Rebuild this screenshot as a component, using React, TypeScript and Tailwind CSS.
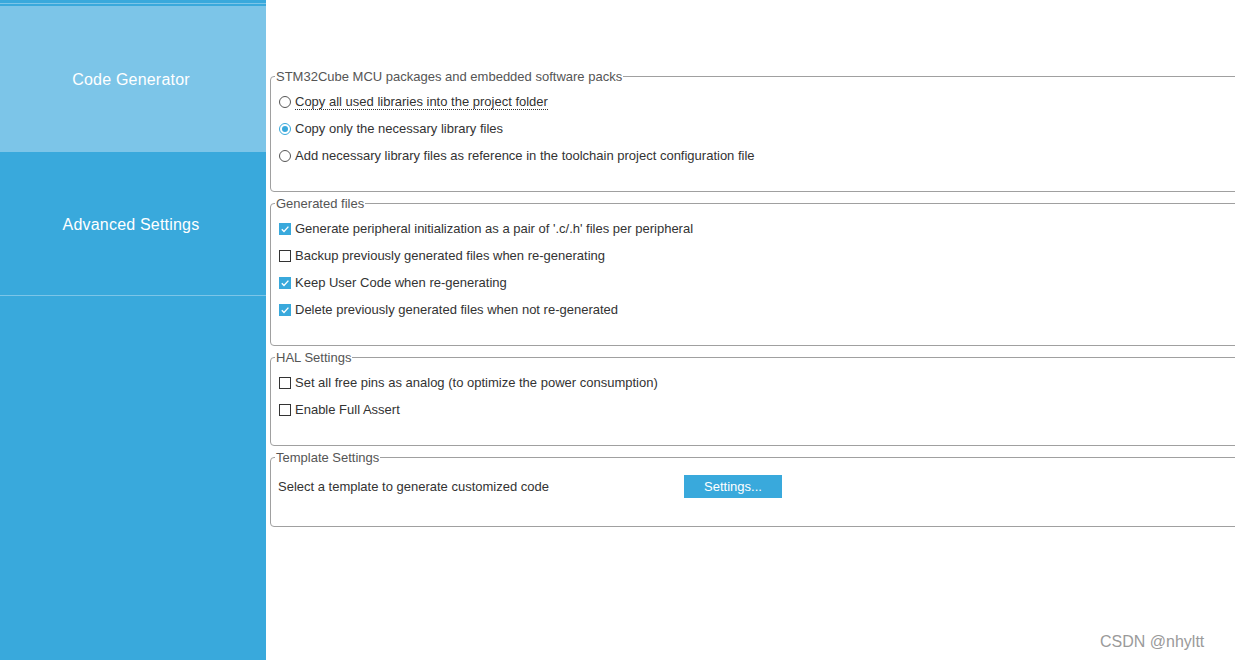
import React from "react";

const font = { fontFamily: '"Liberation Sans", Arial, sans-serif' };

function Radio({ checked }: { checked?: boolean }) {
  return (
    <span
      className={`flex h-[12px] w-[12px] shrink-0 items-center justify-center rounded-full border ${
        checked ? "border-[#39a9dc]" : "border-[#555555]"
      } bg-white`}
    >
      {checked && <span className="h-[6px] w-[6px] rounded-full bg-[#39a9dc]" />}
    </span>
  );
}

function Check({ checked }: { checked?: boolean }) {
  return checked ? (
    <span className="flex h-[12px] w-[12px] shrink-0 items-center justify-center bg-[#39a9dc]">
      <svg width="10" height="10" viewBox="0 0 10 10">
        <path d="M1.8 5.2 L4 7.4 L8.4 2.6" fill="none" stroke="white" strokeWidth="1.4" />
      </svg>
    </span>
  ) : (
    <span className="h-[12px] w-[12px] shrink-0 border border-[#333333] bg-white" />
  );
}

function Row({ children, label, underline }: { children: React.ReactNode; label: string; underline?: boolean }) {
  return (
    <div className="flex h-[27px] items-center gap-[4px] pl-[4px]">
      {children}
      <span
        className={`text-[13px] text-[#333333] ${underline ? "border-b border-dotted border-[#333333] leading-[15px]" : ""}`}
      >
        {label}
      </span>
    </div>
  );
}

function Group({ title, children, pb = "pb-[22px]", pt = "pt-[4px]" }: { title: string; children: React.ReactNode; pb?: string; pt?: string }) {
  return (
    <fieldset className={`mr-[-20px] rounded-[4px] border border-[#a0a0a0] pl-[4px] ${pt} ${pb}`}>
      <legend className="px-[1px] text-[13px] leading-[15px] text-[#555555]">{title}</legend>
      {children}
    </fieldset>
  );
}

export default function App() {
  return (
    <div className="relative flex h-[660px] w-[1235px] overflow-hidden bg-white" style={font}>
      <aside className="flex w-[266px] shrink-0 flex-col bg-[#39a9dc]">
        <div className="h-[3px] bg-[#39a9dc]" />
        <div className="h-[1px] bg-[#7cc5e8]" />
        <div className="h-[2px] bg-[#39a9dc]" />
        <div className="flex h-[146px] items-center justify-center bg-[#7cc5e8] pt-[2px] pr-[4px] text-[16px] tracking-[0.2px] text-white">
          Code Generator
        </div>
        <div className="flex h-[143px] items-center justify-center pt-[3px] pr-[4px] text-[16px] tracking-[0.2px] text-white">
          Advanced Settings
        </div>
        <div className="h-[1px] bg-[#7cc5e8]" />
      </aside>
      <main className="flex min-w-0 flex-1 flex-col gap-[4px] pl-[4px] pt-[69px]">
        <Group title="STM32Cube MCU packages and embedded software packs">
          <Row label="Copy all used libraries into the project folder" underline>
            <Radio />
          </Row>
          <Row label="Copy only the necessary library files">
            <Radio checked />
          </Row>
          <Row label="Add necessary library files as reference in the toolchain project configuration file">
            <Radio />
          </Row>
        </Group>
        <Group title="Generated files">
          <Row label="Generate peripheral initialization as a pair of '.c/.h' files per peripheral">
            <Check checked />
          </Row>
          <Row label="Backup previously generated files when re-generating">
            <Check />
          </Row>
          <Row label="Keep User Code when re-generating">
            <Check checked />
          </Row>
          <Row label="Delete previously generated files when not re-generated">
            <Check checked />
          </Row>
        </Group>
        <Group title="HAL Settings">
          <Row label="Set all free pins as analog (to optimize the power consumption)">
            <Check />
          </Row>
          <Row label="Enable Full Assert">
            <Check />
          </Row>
        </Group>
        <Group title="Template Settings" pt="pt-[10px]" pb="pb-[28px]">
          <div className="flex h-[23px] items-center pl-[3px]">
            <span className="w-[406px] text-[13px] text-[#333333]">Select a template to generate customized code</span>
            <button className="h-[23px] w-[98px] bg-[#39a9dc] text-[13px] text-white">Settings...</button>
          </div>
        </Group>
      </main>
      <div className="absolute left-[1100px] top-[630px] text-[16px] text-[#9a9a9a]">CSDN @nhyltt</div>
    </div>
  );
}
